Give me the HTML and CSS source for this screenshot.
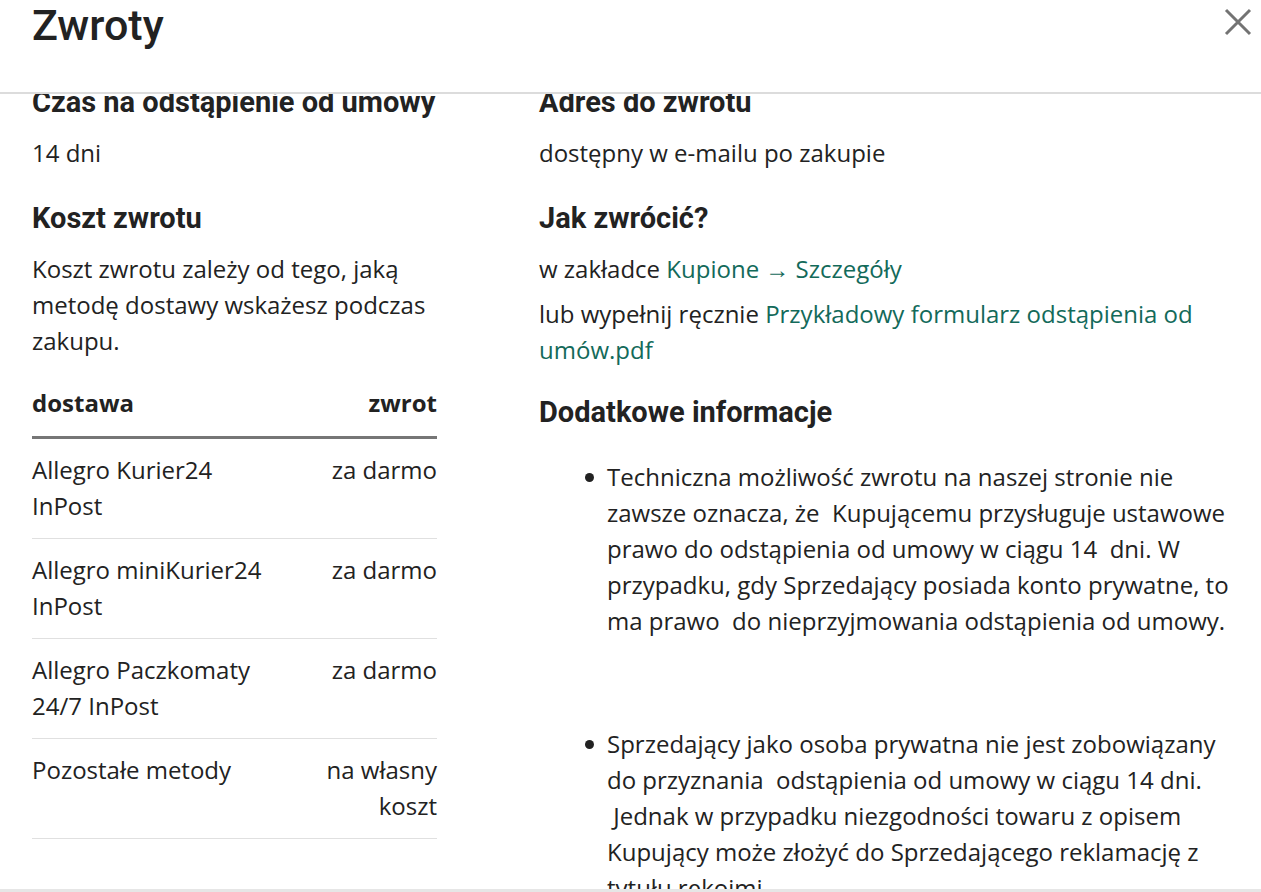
FILE: index.html
```html
<!DOCTYPE html>
<html lang="pl">
<head>
<meta charset="utf-8">
<title>Zwroty</title>
<link rel="stylesheet" href="styles.css">
</head>
<body>
<div class="dialog">
  <header class="dialog-header">
    <h1 class="dialog-title">Zwroty</h1>
    <button class="close-btn" aria-label="Zamknij">
      <svg width="28" height="28" viewBox="0 0 28 28"><path d="M2 2 L26 26 M26 2 L2 26" stroke="#737373" stroke-width="3" fill="none"/></svg>
    </button>
  </header>
  <div class="dialog-body">
    <div class="content">
      <div class="column">
        <section class="block">
          <h2 class="block-title">Czas na odstąpienie od umowy</h2>
          <p class="text">14 dni</p>
        </section>
        <section class="block">
          <h2 class="block-title">Koszt zwrotu</h2>
          <p class="text">Koszt zwrotu zależy od tego, jaką metodę dostawy wskażesz podczas zakupu.</p>
          <table class="cost-table">
            <colgroup><col class="col-method"><col class="col-cost"></colgroup>
            <thead>
              <tr><th class="th-left">dostawa</th><th class="th-right">zwrot</th></tr>
            </thead>
            <tbody>
              <tr><td>Allegro Kurier24 InPost</td><td class="td-right">za darmo</td></tr>
              <tr><td>Allegro miniKurier24 InPost</td><td class="td-right">za darmo</td></tr>
              <tr><td>Allegro Paczkomaty 24/7 InPost</td><td class="td-right">za darmo</td></tr>
              <tr><td>Pozostałe metody</td><td class="td-right">na własny koszt</td></tr>
            </tbody>
          </table>
        </section>
      </div>
      <div class="column">
        <section class="block">
          <h2 class="block-title">Adres do zwrotu</h2>
          <p class="text">dostępny w e-mailu po zakupie</p>
        </section>
        <section class="block">
          <h2 class="block-title">Jak zwrócić?</h2>
          <p class="text">w zakładce <a class="link" href="#">Kupione → Szczegóły</a></p>
          <p class="text text-next">lub wypełnij ręcznie <a class="link" href="#">Przykładowy formularz odstąpienia od umów.pdf</a></p>
        </section>
        <section class="block block-info">
          <h2 class="block-title">Dodatkowe informacje</h2>
          <ul class="info-list">
            <li>Techniczna możliwość zwrotu na naszej stronie nie zawsze oznacza, że&nbsp; Kupującemu przysługuje ustawowe prawo do odstąpienia od umowy w ciągu 14&nbsp; dni. W przypadku, gdy Sprzedający posiada konto prywatne, to ma prawo&nbsp; do nieprzyjmowania odstąpienia od umowy.</li>
            <li>Sprzedający jako osoba prywatna nie jest zobowiązany do przyznania&nbsp; odstąpienia od umowy w ciągu 14 dni. &nbsp;Jednak w przypadku niezgodności towaru z opisem Kupujący może złożyć do Sprzedającego reklamację z tytułu rękojmi.</li>
          </ul>
        </section>
      </div>
    </div>
  </div>
</div>
</body>
</html>
```

FILE: styles.css
```css
* { box-sizing: border-box; }
html, body { margin: 0; padding: 0; background: #fff; }
body {
  font-family: "Open Sans", "Liberation Sans", sans-serif;
  color: #222;
  overflow: hidden;
}
.dialog {
  width: 1261px;
  height: 892px;
  display: flex;
  flex-direction: column;
}
.dialog-header {
  height: 94px;
  flex: none;
  display: flex;
  justify-content: space-between;
  align-items: flex-start;
  padding: 0 9px 0 32px;
  border-bottom: 2px solid #dcdcdc;
}
.dialog-title {
  margin: 0;
  font-family: Roboto, "Liberation Sans", sans-serif;
  font-weight: 500;
  font-size: 43px;
  line-height: 50px;
  color: #222;
}
.close-btn {
  margin-top: 8px;
  padding: 0;
  border: 0;
  background: none;
  width: 28px;
  height: 28px;
  display: block;
}
.close-btn svg { display: block; }
.dialog-body {
  height: 798px;
  flex: none;
  overflow: hidden;
  border-bottom: 3px solid #e6e6e6;
}
.content {
  margin-top: -8px;
  padding: 0 32px;
  display: grid;
  grid-template-columns: 405px 1fr;
  column-gap: 102px;
}
.block + .block { margin-top: 31px; }
.block-info.block { margin-top: 28px; }
.block-title {
  margin: 0 0 17px;
  font-family: Roboto, "Liberation Sans", sans-serif;
  font-weight: 700;
  font-size: 29px;
  line-height: 32px;
  color: #222;
}
.text {
  margin: 0;
  font-size: 24px;
  line-height: 36px;
}
.text-next { margin-top: 9px; }
.link { color: #136a5a; text-decoration: none; }
.cost-table {
  margin-top: 26px;
  width: 100%;
  border-collapse: collapse;
  table-layout: fixed;
  font-size: 24px;
  line-height: 36px;
}
.col-method { width: 62%; }
.col-cost { width: 38%; }
.cost-table th {
  font-weight: 700;
  padding: 0 0 15px;
  border-bottom: 3px solid #767676;
}
.th-left { text-align: left; }
.th-right { text-align: right; }
.cost-table td {
  padding: 13px 0 14px;
  border-bottom: 1px solid #e0e0e0;
  vertical-align: top;
  text-align: left;
}
.cost-table .td-right { text-align: right; }
.info-list {
  list-style: none;
  margin: 31px 0 0;
  padding: 0 0 0 68px;
  font-size: 24px;
  line-height: 36px;
}
.info-list li { position: relative; }
.info-list li::before {
  content: "";
  position: absolute;
  left: -22px;
  top: 14px;
  width: 9px;
  height: 9px;
  border-radius: 50%;
  background: #222;
}
.info-list li + li { margin-top: 87px; }
```
